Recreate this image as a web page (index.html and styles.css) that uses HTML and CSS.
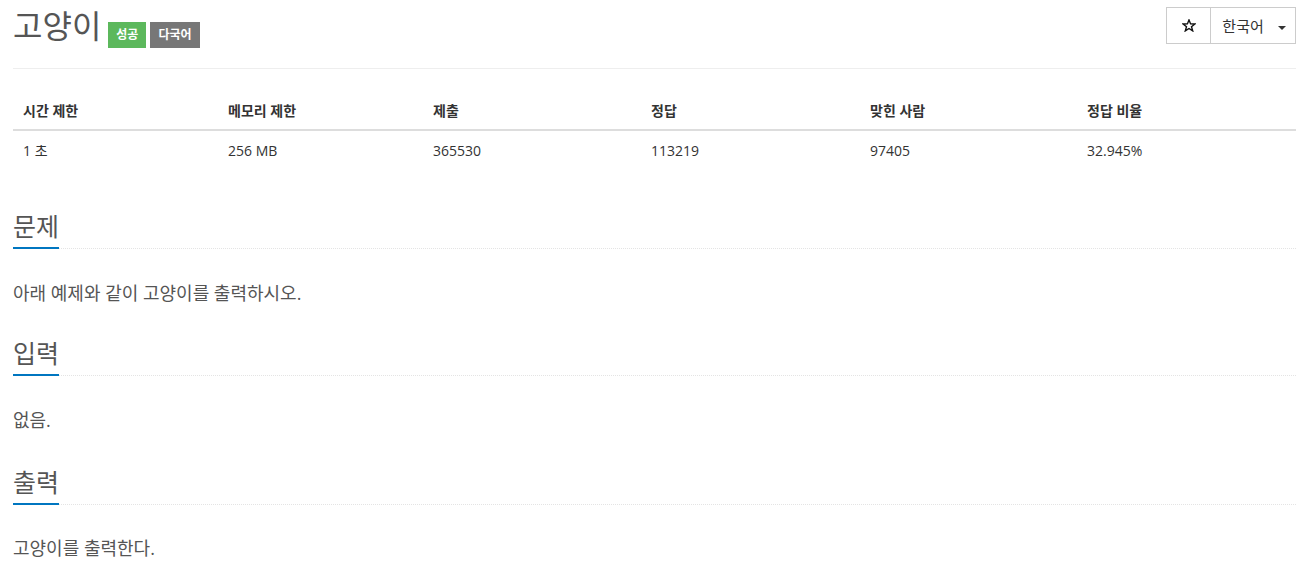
FILE: index.html
```html
<!DOCTYPE html>
<html lang="ko">
<head>
<meta charset="utf-8">
<title>고양이</title>
<link rel="stylesheet" href="styles.css">
</head>
<body>
<div class="page">
  <div class="title-row">
    <div class="title-left">
      <span class="title">고양이</span>
      <span class="badge badge-success">성공</span>
      <span class="badge badge-gray">다국어</span>
    </div>
    <div class="btn-group">
      <button class="btn btn-star" aria-label="즐겨찾기"><svg class="star" width="14" height="13" viewBox="0 0 14 13"><polygon points="7,0.9 8.6,4.9 12.9,5.0 9.5,7.7 10.7,11.9 7,9.5 3.3,11.9 4.5,7.7 1.1,5.0 5.4,4.9" fill="none" stroke="#111" stroke-width="1.4" stroke-linejoin="miter"/></svg></button>
      <button class="btn btn-lang">한국어 <span class="caret"></span></button>
    </div>
  </div>
  <div class="rule"></div>

  <table class="info">
    <thead>
      <tr>
        <th class="c1">시간 제한</th>
        <th class="c2">메모리 제한</th>
        <th class="c3">제출</th>
        <th class="c4">정답</th>
        <th class="c5">맞힌 사람</th>
        <th class="c6">정답 비율</th>
      </tr>
    </thead>
    <tbody>
      <tr>
        <td>1 초</td>
        <td>256 MB</td>
        <td>365530</td>
        <td>113219</td>
        <td>97405</td>
        <td>32.945%</td>
      </tr>
    </tbody>
  </table>

  <section class="section">
    <div class="headline"><h2>문제</h2></div>
    <p class="text">아래 예제와 같이 고양이를 출력하시오.</p>
  </section>
  <section class="section">
    <div class="headline"><h2>입력</h2></div>
    <p class="text">없음.</p>
  </section>
  <section class="section">
    <div class="headline"><h2>출력</h2></div>
    <p class="text">고양이를 출력한다.</p>
  </section>
</div>
</body>
</html>
```
FILE: styles.css
```css
html, body {
  margin: 0;
  padding: 0;
  background: #fff;
}
body {
  font-family: "Open Sans", "Noto Sans CJK KR", sans-serif;
  color: #555;
  font-size: 14px;
}
.page {
  padding: 0 7px 0 13px;
}
.title-row {
  display: flex;
  justify-content: space-between;
  align-items: flex-start;
  height: 68px;
}
.title-left {
  display: flex;
  align-items: flex-start;
  padding-top: 6px;
}
.title {
  font-size: 32px;
  line-height: 40px;
  color: #555;
  margin-right: 7px;
}
.badge {
  display: inline-block;
  margin-top: 16px;
  height: 26px;
  line-height: 26px;
  padding: 0 8px;
  font-size: 12px;
  font-weight: bold;
  color: #fff;
  margin-right: 4px;
}
.badge-success { background: #5cb85c; }
.badge-gray { background: #777; }
.btn-group {
  display: flex;
  margin-top: 7px;
}
.btn {
  font-family: "Open Sans", "Noto Sans CJK KR", sans-serif;
  background: #fff;
  border: 1px solid #ccc;
  height: 37px;
  color: #333;
  font-size: 14px;
  padding: 0;
  margin: 0;
}
.btn-star {
  width: 45px;
  display: flex;
  align-items: center;
  justify-content: center;
}
.star {
  display: block;
  margin-top: -1px;
}
.btn-lang {
  width: 85px;
  border-left: none;
  padding-left: 2px;
  font-size: 15px;
}
.caret {
  display: inline-block;
  width: 0;
  height: 0;
  margin-left: 10px;
  vertical-align: middle;
  border-top: 4px solid #333;
  border-left: 4px solid transparent;
  border-right: 4px solid transparent;
}
.rule {
  height: 1px;
  background: #eee;
}
.info {
  width: 100%;
  border-collapse: collapse;
  table-layout: fixed;
  margin-top: 24px;
  color: #333;
}
.info th, .info td {
  text-align: left;
  padding: 8px 10px;
  line-height: 20px;
  font-size: 14px;
}
.info th {
  font-weight: bold;
  border-bottom: 2px solid #ddd;
}
.info td { padding-top: 10px; }
.c1 { width: 185px; }
.c2 { width: 185px; }
.c3 { width: 198px; }
.c4 { width: 199px; }
.c5 { width: 197px; }
.headline {
  margin: 31px 0 0 0;
  border-bottom: 1px dotted #e4e4e4;
  line-height: 0;
}
.section:first-of-type .headline { margin-top: 43px; }
.section:last-of-type .headline { margin-top: 33px; }
.headline h2 {
  display: inline-block;
  margin: 0 0 -1px 0;
  padding-bottom: 7px;
  font-size: 25px;
  line-height: 28px;
  font-weight: normal;
  color: #555;
  border-bottom: 2px solid #0076c0;
}
.text {
  margin: 29px 0 0 0;
  font-size: 18px;
  line-height: 30px;
  color: #555;
}
.section:last-of-type .text { margin-top: 28px; }
```
